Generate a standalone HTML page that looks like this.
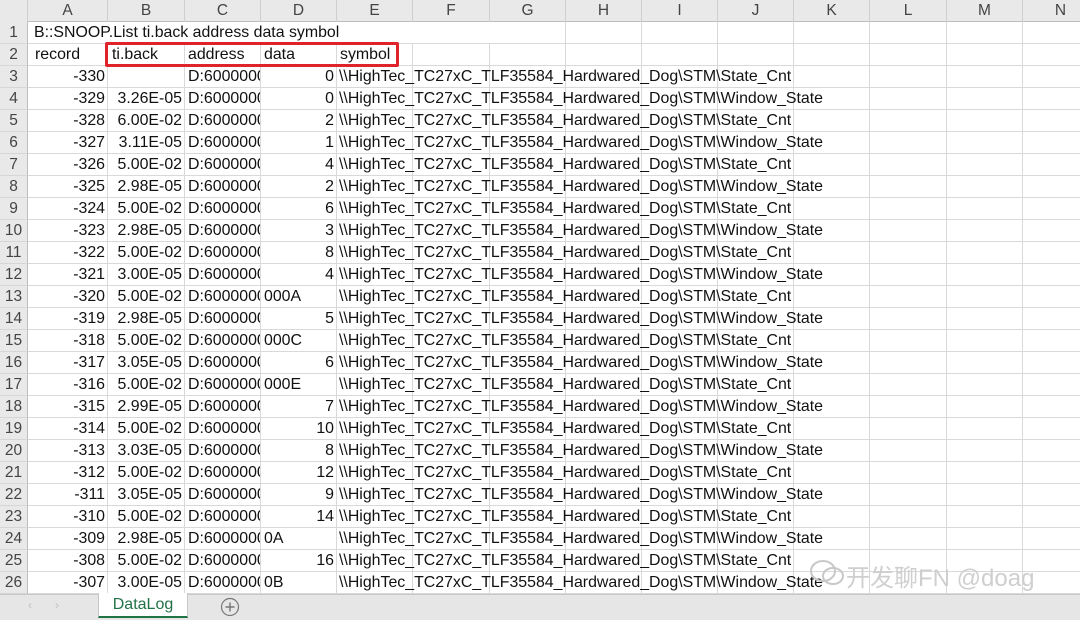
<!DOCTYPE html>
<html><head><meta charset="utf-8"><style>
*{margin:0;padding:0;box-sizing:border-box}
body{width:1080px;height:620px;overflow:hidden;background:#fff;font-family:"Liberation Sans","Noto Sans CJK SC",sans-serif;font-size:15.9px;color:#111;position:relative}
.hdr{position:absolute;left:0;top:0;width:1080px;height:22px;background:#e9e9e9;border-bottom:1px solid #bdbdbd}
.ch{position:absolute;top:0;height:22px;line-height:22px;text-align:center;color:#444;font-size:15.5px;border-right:1px solid #cfcfcf}
.rh{position:absolute;left:0;width:28px;height:22px;line-height:22px;text-align:center;background:#e9e9e9;color:#444;font-size:15.5px;border-right:1px solid #bdbdbd;border-bottom:1px solid #d6d6d6}
.vl{position:absolute;top:22px;height:572px;width:1px;background:#d9d9d9}
.hl{position:absolute;left:28px;width:1052px;height:1px;background:#d9d9d9}
.c{position:absolute;height:21px;line-height:22px;white-space:nowrap;overflow:hidden;padding:0 2px;background:#fff}
.r{text-align:right}
.e{position:absolute;height:21px;line-height:22px;white-space:nowrap;padding:0 2px}
.bar{position:absolute;left:0;top:594px;width:1080px;height:26px;background:#e6e6e6;border-top:1px solid #c8c8c8}
.tab{position:absolute;left:98px;top:593px;width:90px;height:25px;background:#fff;color:#217346;text-align:center;line-height:23px;font-size:16px;border-bottom:2px solid #217346;border-left:1px solid #c8c8c8;border-right:1px solid #c8c8c8}
</style></head><body>
<div class="hdr"></div>
<div class="ch" style="left:0;width:28px;background:#e9e9e9"></div>
<div class="ch" style="left:28px;width:80px">A</div>
<div class="ch" style="left:108px;width:77px">B</div>
<div class="ch" style="left:185px;width:76px">C</div>
<div class="ch" style="left:261px;width:76px">D</div>
<div class="ch" style="left:337px;width:76px">E</div>
<div class="ch" style="left:413px;width:77px">F</div>
<div class="ch" style="left:490px;width:76px">G</div>
<div class="ch" style="left:566px;width:76px">H</div>
<div class="ch" style="left:642px;width:76px">I</div>
<div class="ch" style="left:718px;width:76px">J</div>
<div class="ch" style="left:794px;width:76px">K</div>
<div class="ch" style="left:870px;width:77px">L</div>
<div class="ch" style="left:947px;width:76px">M</div>
<div class="ch" style="left:1023px;width:76px">N</div>

<div class="vl" style="left:107px"></div><div class="vl" style="left:184px"></div><div class="vl" style="left:260px"></div><div class="vl" style="left:336px"></div><div class="vl" style="left:412px"></div><div class="vl" style="left:489px"></div><div class="vl" style="left:565px"></div><div class="vl" style="left:641px"></div><div class="vl" style="left:717px"></div><div class="vl" style="left:793px"></div><div class="vl" style="left:869px"></div><div class="vl" style="left:946px"></div><div class="vl" style="left:1022px"></div>

<div class="hl" style="top:43px"></div><div class="hl" style="top:65px"></div><div class="hl" style="top:87px"></div><div class="hl" style="top:109px"></div><div class="hl" style="top:131px"></div><div class="hl" style="top:153px"></div><div class="hl" style="top:175px"></div><div class="hl" style="top:197px"></div><div class="hl" style="top:219px"></div><div class="hl" style="top:241px"></div><div class="hl" style="top:263px"></div><div class="hl" style="top:285px"></div><div class="hl" style="top:307px"></div><div class="hl" style="top:329px"></div><div class="hl" style="top:351px"></div><div class="hl" style="top:373px"></div><div class="hl" style="top:395px"></div><div class="hl" style="top:417px"></div><div class="hl" style="top:439px"></div><div class="hl" style="top:461px"></div><div class="hl" style="top:483px"></div><div class="hl" style="top:505px"></div><div class="hl" style="top:527px"></div><div class="hl" style="top:549px"></div><div class="hl" style="top:571px"></div><div class="hl" style="top:593px"></div>

<div class="rh" style="top:22px">1</div><div class="rh" style="top:44px">2</div><div class="rh" style="top:66px">3</div><div class="rh" style="top:88px">4</div><div class="rh" style="top:110px">5</div><div class="rh" style="top:132px">6</div><div class="rh" style="top:154px">7</div><div class="rh" style="top:176px">8</div><div class="rh" style="top:198px">9</div><div class="rh" style="top:220px">10</div><div class="rh" style="top:242px">11</div><div class="rh" style="top:264px">12</div><div class="rh" style="top:286px">13</div><div class="rh" style="top:308px">14</div><div class="rh" style="top:330px">15</div><div class="rh" style="top:352px">16</div><div class="rh" style="top:374px">17</div><div class="rh" style="top:396px">18</div><div class="rh" style="top:418px">19</div><div class="rh" style="top:440px">20</div><div class="rh" style="top:462px">21</div><div class="rh" style="top:484px">22</div><div class="rh" style="top:506px">23</div><div class="rh" style="top:528px">24</div><div class="rh" style="top:550px">25</div><div class="rh" style="top:572px">26</div>

<div class="e" style="left:32px;top:22px;background:#fff;width:460px">B::SNOOP.List ti.back address data symbol</div>
<div class="c" style="left:33px;top:44px;width:74px">record</div>
<div class="c" style="left:110px;top:44px;width:74px">ti.back</div>
<div class="c" style="left:186px;top:44px;width:74px">address</div>
<div class="c" style="left:262px;top:44px;width:74px">data</div>
<div class="c" style="left:338px;top:44px;width:74px">symbol</div>

<div class="c r" style="left:28px;top:66px;width:79px">-330</div><div class="c" style="left:186px;top:66px;width:74px">D:60000000</div><div class="c r" style="left:261px;top:66px;width:75px">0</div><div class="e" style="left:337px;top:66px">\\HighTec_TC27xC_TLF35584_Hardwared_Dog\STM\State_Cnt</div>
<div class="c r" style="left:28px;top:88px;width:79px">-329</div><div class="c r" style="left:108px;top:88px;width:76px">3.26E-05</div><div class="c" style="left:186px;top:88px;width:74px">D:60000000</div><div class="c r" style="left:261px;top:88px;width:75px">0</div><div class="e" style="left:337px;top:88px">\\HighTec_TC27xC_TLF35584_Hardwared_Dog\STM\Window_State</div>
<div class="c r" style="left:28px;top:110px;width:79px">-328</div><div class="c r" style="left:108px;top:110px;width:76px">6.00E-02</div><div class="c" style="left:186px;top:110px;width:74px">D:60000000</div><div class="c r" style="left:261px;top:110px;width:75px">2</div><div class="e" style="left:337px;top:110px">\\HighTec_TC27xC_TLF35584_Hardwared_Dog\STM\State_Cnt</div>
<div class="c r" style="left:28px;top:132px;width:79px">-327</div><div class="c r" style="left:108px;top:132px;width:76px">3.11E-05</div><div class="c" style="left:186px;top:132px;width:74px">D:60000000</div><div class="c r" style="left:261px;top:132px;width:75px">1</div><div class="e" style="left:337px;top:132px">\\HighTec_TC27xC_TLF35584_Hardwared_Dog\STM\Window_State</div>
<div class="c r" style="left:28px;top:154px;width:79px">-326</div><div class="c r" style="left:108px;top:154px;width:76px">5.00E-02</div><div class="c" style="left:186px;top:154px;width:74px">D:60000000</div><div class="c r" style="left:261px;top:154px;width:75px">4</div><div class="e" style="left:337px;top:154px">\\HighTec_TC27xC_TLF35584_Hardwared_Dog\STM\State_Cnt</div>
<div class="c r" style="left:28px;top:176px;width:79px">-325</div><div class="c r" style="left:108px;top:176px;width:76px">2.98E-05</div><div class="c" style="left:186px;top:176px;width:74px">D:60000000</div><div class="c r" style="left:261px;top:176px;width:75px">2</div><div class="e" style="left:337px;top:176px">\\HighTec_TC27xC_TLF35584_Hardwared_Dog\STM\Window_State</div>
<div class="c r" style="left:28px;top:198px;width:79px">-324</div><div class="c r" style="left:108px;top:198px;width:76px">5.00E-02</div><div class="c" style="left:186px;top:198px;width:74px">D:60000000</div><div class="c r" style="left:261px;top:198px;width:75px">6</div><div class="e" style="left:337px;top:198px">\\HighTec_TC27xC_TLF35584_Hardwared_Dog\STM\State_Cnt</div>
<div class="c r" style="left:28px;top:220px;width:79px">-323</div><div class="c r" style="left:108px;top:220px;width:76px">2.98E-05</div><div class="c" style="left:186px;top:220px;width:74px">D:60000000</div><div class="c r" style="left:261px;top:220px;width:75px">3</div><div class="e" style="left:337px;top:220px">\\HighTec_TC27xC_TLF35584_Hardwared_Dog\STM\Window_State</div>
<div class="c r" style="left:28px;top:242px;width:79px">-322</div><div class="c r" style="left:108px;top:242px;width:76px">5.00E-02</div><div class="c" style="left:186px;top:242px;width:74px">D:60000000</div><div class="c r" style="left:261px;top:242px;width:75px">8</div><div class="e" style="left:337px;top:242px">\\HighTec_TC27xC_TLF35584_Hardwared_Dog\STM\State_Cnt</div>
<div class="c r" style="left:28px;top:264px;width:79px">-321</div><div class="c r" style="left:108px;top:264px;width:76px">3.00E-05</div><div class="c" style="left:186px;top:264px;width:74px">D:60000000</div><div class="c r" style="left:261px;top:264px;width:75px">4</div><div class="e" style="left:337px;top:264px">\\HighTec_TC27xC_TLF35584_Hardwared_Dog\STM\Window_State</div>
<div class="c r" style="left:28px;top:286px;width:79px">-320</div><div class="c r" style="left:108px;top:286px;width:76px">5.00E-02</div><div class="c" style="left:186px;top:286px;width:74px">D:60000000</div><div class="c" style="left:262px;top:286px;width:74px">000A</div><div class="e" style="left:337px;top:286px">\\HighTec_TC27xC_TLF35584_Hardwared_Dog\STM\State_Cnt</div>
<div class="c r" style="left:28px;top:308px;width:79px">-319</div><div class="c r" style="left:108px;top:308px;width:76px">2.98E-05</div><div class="c" style="left:186px;top:308px;width:74px">D:60000000</div><div class="c r" style="left:261px;top:308px;width:75px">5</div><div class="e" style="left:337px;top:308px">\\HighTec_TC27xC_TLF35584_Hardwared_Dog\STM\Window_State</div>
<div class="c r" style="left:28px;top:330px;width:79px">-318</div><div class="c r" style="left:108px;top:330px;width:76px">5.00E-02</div><div class="c" style="left:186px;top:330px;width:74px">D:60000000</div><div class="c" style="left:262px;top:330px;width:74px">000C</div><div class="e" style="left:337px;top:330px">\\HighTec_TC27xC_TLF35584_Hardwared_Dog\STM\State_Cnt</div>
<div class="c r" style="left:28px;top:352px;width:79px">-317</div><div class="c r" style="left:108px;top:352px;width:76px">3.05E-05</div><div class="c" style="left:186px;top:352px;width:74px">D:60000000</div><div class="c r" style="left:261px;top:352px;width:75px">6</div><div class="e" style="left:337px;top:352px">\\HighTec_TC27xC_TLF35584_Hardwared_Dog\STM\Window_State</div>
<div class="c r" style="left:28px;top:374px;width:79px">-316</div><div class="c r" style="left:108px;top:374px;width:76px">5.00E-02</div><div class="c" style="left:186px;top:374px;width:74px">D:60000000</div><div class="c" style="left:262px;top:374px;width:74px">000E</div><div class="e" style="left:337px;top:374px">\\HighTec_TC27xC_TLF35584_Hardwared_Dog\STM\State_Cnt</div>
<div class="c r" style="left:28px;top:396px;width:79px">-315</div><div class="c r" style="left:108px;top:396px;width:76px">2.99E-05</div><div class="c" style="left:186px;top:396px;width:74px">D:60000000</div><div class="c r" style="left:261px;top:396px;width:75px">7</div><div class="e" style="left:337px;top:396px">\\HighTec_TC27xC_TLF35584_Hardwared_Dog\STM\Window_State</div>
<div class="c r" style="left:28px;top:418px;width:79px">-314</div><div class="c r" style="left:108px;top:418px;width:76px">5.00E-02</div><div class="c" style="left:186px;top:418px;width:74px">D:60000000</div><div class="c r" style="left:261px;top:418px;width:75px">10</div><div class="e" style="left:337px;top:418px">\\HighTec_TC27xC_TLF35584_Hardwared_Dog\STM\State_Cnt</div>
<div class="c r" style="left:28px;top:440px;width:79px">-313</div><div class="c r" style="left:108px;top:440px;width:76px">3.03E-05</div><div class="c" style="left:186px;top:440px;width:74px">D:60000000</div><div class="c r" style="left:261px;top:440px;width:75px">8</div><div class="e" style="left:337px;top:440px">\\HighTec_TC27xC_TLF35584_Hardwared_Dog\STM\Window_State</div>
<div class="c r" style="left:28px;top:462px;width:79px">-312</div><div class="c r" style="left:108px;top:462px;width:76px">5.00E-02</div><div class="c" style="left:186px;top:462px;width:74px">D:60000000</div><div class="c r" style="left:261px;top:462px;width:75px">12</div><div class="e" style="left:337px;top:462px">\\HighTec_TC27xC_TLF35584_Hardwared_Dog\STM\State_Cnt</div>
<div class="c r" style="left:28px;top:484px;width:79px">-311</div><div class="c r" style="left:108px;top:484px;width:76px">3.05E-05</div><div class="c" style="left:186px;top:484px;width:74px">D:60000000</div><div class="c r" style="left:261px;top:484px;width:75px">9</div><div class="e" style="left:337px;top:484px">\\HighTec_TC27xC_TLF35584_Hardwared_Dog\STM\Window_State</div>
<div class="c r" style="left:28px;top:506px;width:79px">-310</div><div class="c r" style="left:108px;top:506px;width:76px">5.00E-02</div><div class="c" style="left:186px;top:506px;width:74px">D:60000000</div><div class="c r" style="left:261px;top:506px;width:75px">14</div><div class="e" style="left:337px;top:506px">\\HighTec_TC27xC_TLF35584_Hardwared_Dog\STM\State_Cnt</div>
<div class="c r" style="left:28px;top:528px;width:79px">-309</div><div class="c r" style="left:108px;top:528px;width:76px">2.98E-05</div><div class="c" style="left:186px;top:528px;width:74px">D:60000000</div><div class="c" style="left:262px;top:528px;width:74px">0A</div><div class="e" style="left:337px;top:528px">\\HighTec_TC27xC_TLF35584_Hardwared_Dog\STM\Window_State</div>
<div class="c r" style="left:28px;top:550px;width:79px">-308</div><div class="c r" style="left:108px;top:550px;width:76px">5.00E-02</div><div class="c" style="left:186px;top:550px;width:74px">D:60000000</div><div class="c r" style="left:261px;top:550px;width:75px">16</div><div class="e" style="left:337px;top:550px">\\HighTec_TC27xC_TLF35584_Hardwared_Dog\STM\State_Cnt</div>
<div class="c r" style="left:28px;top:572px;width:79px">-307</div><div class="c r" style="left:108px;top:572px;width:76px">3.00E-05</div><div class="c" style="left:186px;top:572px;width:74px">D:60000000</div><div class="c" style="left:262px;top:572px;width:74px">0B</div><div class="e" style="left:337px;top:572px">\\HighTec_TC27xC_TLF35584_Hardwared_Dog\STM\Window_State</div>

<div style="position:absolute;left:105px;top:42px;width:294px;height:25px;border:3px solid #e0222a;border-radius:2px"></div>

<svg style="position:absolute;left:808px;top:556px" width="40" height="34" viewBox="0 0 40 34"><g fill="none" stroke="#c8c8c8" stroke-width="2"><ellipse cx="15" cy="15" rx="12" ry="10"/><ellipse cx="25" cy="20" rx="10" ry="8"/></g></svg>
<div style="position:absolute;left:846px;top:558px;font-size:24px;color:#cfcfcf;white-space:nowrap">开发聊FN @doag</div>

<div class="bar"></div>
<div style="position:absolute;left:28px;top:598px;color:#c0c0c0;font-size:12px">&#8249;</div>
<div style="position:absolute;left:55px;top:598px;color:#c0c0c0;font-size:12px">&#8250;</div>
<div class="tab">DataLog</div>
<svg style="position:absolute;left:220px;top:597px" width="20" height="20" viewBox="0 0 20 20"><circle cx="10" cy="10" r="8.5" fill="none" stroke="#777" stroke-width="1.2"/><path d="M10 5.5v9M5.5 10h9" stroke="#777" stroke-width="1.4"/></svg>
</body></html>
